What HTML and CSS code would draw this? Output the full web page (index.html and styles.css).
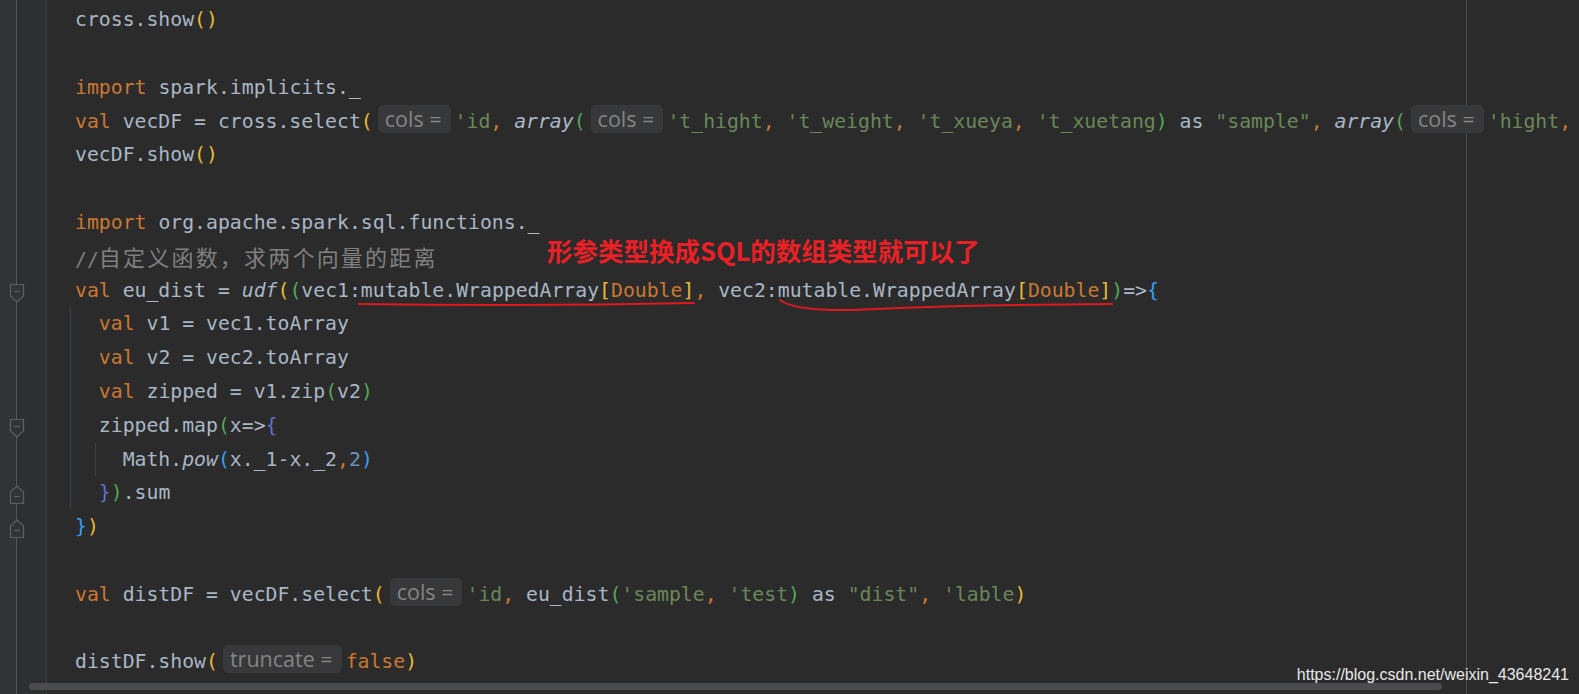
FILE: index.html
```html
<!DOCTYPE html>
<html lang="en">

<head>
  <meta charset="UTF-8" />
  <title>eu_dist.scala</title>
  <link rel="stylesheet" href="styles.css">
</head>

<body>
  <div class="editor">
    <!-- fold gutter -->
    <div class="gutter">
      <div class="fold-row"></div>
      <div class="fold-row"></div>
      <div class="fold-row"></div>
      <div class="fold-row"></div>
      <div class="fold-row"></div>
      <div class="fold-row"></div>
      <div class="fold-row"></div>
      <div class="fold-row"></div>
      <div class="fold-row">
        <svg class="fold" width="16" height="20" viewBox="0 0 16 20"><path d="M1.5 1.5H14.5V13L8 19L1.5 13Z" /><path d="M5 8.5H11" /></svg>
      </div>
      <div class="fold-row"></div>
      <div class="fold-row"></div>
      <div class="fold-row"></div>
      <div class="fold-row">
        <svg class="fold" width="16" height="20" viewBox="0 0 16 20"><path d="M1.5 1.5H14.5V13L8 19L1.5 13Z" /><path d="M5 8.5H11" /></svg>
      </div>
      <div class="fold-row"></div>
      <div class="fold-row">
        <svg class="fold" width="16" height="20" viewBox="0 0 16 20"><path d="M1.5 18.5H14.5V7L8 1L1.5 7Z" /><path d="M5 11.5H11" /></svg>
      </div>
      <div class="fold-row">
        <svg class="fold" width="16" height="20" viewBox="0 0 16 20"><path d="M1.5 18.5H14.5V7L8 1L1.5 7Z" /><path d="M5 11.5H11" /></svg>
      </div>
      <div class="fold-row"></div>
      <div class="fold-row"></div>
      <div class="fold-row"></div>
      <div class="fold-row"></div>
    </div>

    <!-- code -->
    <div class="code">
      <div class="line">cross.show<span class="b1">()</span></div>
      <div class="line"></div>
      <div class="line"><span class="k">import</span> spark.implicits._</div>
      <div class="line"><span class="k">val</span> vecDF = cross.select<span class="b1">(</span><span class="hint">cols =</span><span class="s">'id</span><span class="k">,</span> <span class="i">array</span><span class="b2">(</span><span class="hint">cols =</span><span class="s">'t_hight</span><span class="k">,</span> <span class="s">'t_weight</span><span class="k">,</span> <span class="s">'t_xueya</span><span class="k">,</span> <span class="s">'t_xuetang</span><span class="b2">)</span> as <span class="s">"sample"</span><span class="k">,</span> <span class="i">array</span><span class="b2">(</span><span class="hint">cols =</span><span class="s">'hight</span><span class="k">,</span></div>
      <div class="line">vecDF.show<span class="b1">()</span></div>
      <div class="line"></div>
      <div class="line"><span class="k">import</span> org.apache.spark.sql.functions._</div>
      <div class="line"><span class="c">//<span class="cjk">自定义函数，求两个向量的距离</span></span></div>
      <div class="line"><span class="k">val</span> eu_dist = <span class="i">udf</span><span class="b1">(</span><span class="b2">(</span>vec1:mutable.WrappedArray<span class="b1">[</span><span class="t">Double</span><span class="b1">]</span><span class="k">,</span> vec2:mutable.WrappedArray<span class="b1">[</span><span class="t">Double</span><span class="b1">]</span><span class="b2">)</span>=&gt;<span class="b3">{</span></div>
      <div class="line g1">  <span class="k">val</span> v1 = vec1.toArray</div>
      <div class="line g1">  <span class="k">val</span> v2 = vec2.toArray</div>
      <div class="line g1">  <span class="k">val</span> zipped = v1.zip<span class="b2">(</span>v2<span class="b2">)</span></div>
      <div class="line g1">  zipped.map<span class="b2">(</span>x=&gt;<span class="b4">{</span></div>
      <div class="line g2">    Math.<span class="i">pow</span><span class="b3">(</span>x._1-x._2<span class="k">,</span><span class="n">2</span><span class="b3">)</span></div>
      <div class="line g1">  <span class="b4">}</span><span class="b2">)</span>.sum</div>
      <div class="line"><span class="b3">}</span><span class="b1">)</span></div>
      <div class="line"></div>
      <div class="line"><span class="k">val</span> distDF = vecDF.select<span class="b1">(</span><span class="hint">cols =</span><span class="s">'id</span><span class="k">,</span> eu_dist<span class="b2">(</span><span class="s">'sample</span><span class="k">,</span> <span class="s">'test</span><span class="b2">)</span> as <span class="s">"dist"</span><span class="k">,</span> <span class="s">'lable</span><span class="b1">)</span></div>
      <div class="line"></div>
      <div class="line">distDF.show<span class="b1">(</span><span class="hint">truncate =</span><span class="k">false</span><span class="b1">)</span></div>
    </div>

    <div class="scrollbar"></div>

    <!-- hand-drawn notes on the screenshot -->
    <p class="note">形参类型换成SQL的数组类型就可以了</p>
    <svg class="marks" width="1579" height="694" viewBox="0 0 1579 694">
      <path d="M359 304 Q 520 306.5 694 303" />
      <path d="M780 300 Q 794 311 852 310 Q 905 307.5 960 306 Q 1040 304.5 1112 304" />
    </svg>

    <div class="watermark">https://blog.csdn.net/weixin_43648241</div>
  </div>
</body>

</html>
```

FILE: styles.css
```css
* {
  box-sizing: border-box;
}

body {
  margin: 0;
  background: #2b2b2b;
  overflow: hidden;
}

.editor {
  position: relative;
  display: flex;
  width: 1579px;
  height: 694px;
  background: #2b2b2b;
  overflow: hidden;
}

.gutter {
  flex: none;
  width: 47px;
  padding-top: 3.3px;
  background: linear-gradient(to right, #313335 16px, #555658 16px, #555658 17px, #2e2f30 17px);
  border-right: 1px solid #33432f;
}

.fold-row {
  height: 33.8px;
  display: flex;
  align-items: center;
  padding: 4px 0 0 8.5px;
}

.fold path {
  fill: #313335;
  stroke: #5e5f60;
  stroke-width: 1.2;
}

.code {
  flex: 1;
  min-width: 0;
  padding-top: 3.3px;
  font-family: "DejaVu Sans Mono", "Noto Sans CJK SC", monospace;
  font-size: 19.8px;
  color: #a9b7c6;
  background: linear-gradient(to right, transparent 1419px, #474747 1419px, #474747 1420px, transparent 1420px);
}

.line {
  height: 33.8px;
  line-height: 33.8px;
  padding-left: 28px;
  white-space: pre;
}

/* indent guides */
.g1 {
  background: linear-gradient(to right, transparent 23px, #33485c 23px, #33485c 24px, transparent 24px);
}

.g2 {
  background:
    linear-gradient(to right, transparent 23px, #33485c 23px, #33485c 24px, transparent 24px),
    linear-gradient(to right, transparent 48px, #363f4c 48px, #363f4c 49px, transparent 49px);
}

.k { color: #cc7832; }
.s { color: #6a8759; }
.c { color: #808080; }
.n { color: #6897bb; }
.t { color: #cc7832; }
.i { font-style: italic; }

.b1 { color: #e8ba36; }
.b2 { color: #54a857; }
.b3 { color: #359ff4; }
.b4 { color: #6272d0; }

.cjk {
  font-family: "Noto Sans CJK SC", sans-serif;
  font-size: 22px;
  letter-spacing: 2.2px;
}

.hint {
  display: inline-block;
  height: 28px;
  line-height: 28px;
  margin: 0 4px 0 5px;
  padding: 0 9px 0 7px;
  border-radius: 5px;
  background: #373839;
  color: #858585;
  font-family: "Open Sans", sans-serif;
  font-size: 21.5px;
  vertical-align: 1px;
}

.scrollbar {
  position: absolute;
  left: 29px;
  top: 683px;
  width: 1413px;
  height: 7px;
  border-radius: 4px;
  background: #4a4c4e;
}

.note {
  position: absolute;
  left: 547px;
  top: 234px;
  margin: 0;
  line-height: 32px;
  font-family: "Noto Sans CJK SC", sans-serif;
  font-size: 25.5px;
  font-weight: 700;
  color: #ea2027;
}

.marks {
  position: absolute;
  left: 0;
  top: 0;
  pointer-events: none;
}

.marks path {
  fill: none;
  stroke: #e0191f;
  stroke-width: 2;
  stroke-linecap: round;
}

.watermark {
  position: absolute;
  right: 10px;
  top: 666px;
  line-height: 18px;
  font-family: "Liberation Sans", Arial, sans-serif;
  font-size: 16px;
  color: #e8e8e8;
}
```
